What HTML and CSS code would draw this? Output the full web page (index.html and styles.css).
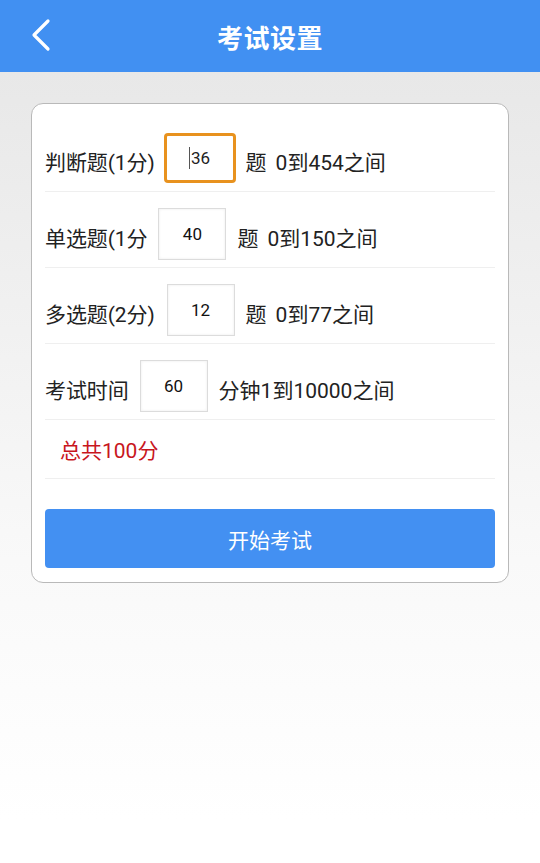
FILE: index.html
```html
<!DOCTYPE html>
<html lang="zh">
<head>
<meta charset="utf-8">
<title>考试设置</title>
<link rel="stylesheet" href="styles.css">
</head>
<body>
<header class="bar">
  <svg class="back" width="22" height="34" viewBox="0 0 22 34"><path d="M18 3 L4 17 L18 31" fill="none" stroke="#fff" stroke-width="3.2" stroke-linecap="round" stroke-linejoin="round"/></svg>
  <h1 class="title">考试设置</h1>
</header>
<main class="page">
  <section class="card">
    <div class="row">
      <span class="label">判断题(1分)</span>
      <span class="field focus"><span class="caret"></span>36</span>
      <span class="unit">题</span>
      <span class="range">0到454之间</span>
    </div>
    <div class="row">
      <span class="label">单选题(1分</span>
      <span class="field">40</span>
      <span class="unit">题</span>
      <span class="range">0到150之间</span>
    </div>
    <div class="row">
      <span class="label">多选题(2分)</span>
      <span class="field">12</span>
      <span class="unit">题</span>
      <span class="range">0到77之间</span>
    </div>
    <div class="row">
      <span class="label">考试时间</span>
      <span class="field">60</span>
      <span class="unit">分钟1到10000之间</span>
    </div>
    <div class="total">总共100分</div>
    <button class="start">开始考试</button>
  </section>
</main>
</body>
</html>
```

FILE: styles.css
```css
html, body {
  margin: 0;
  padding: 0;
}
body {
  width: 540px;
  height: 863px;
  font-family: Roboto, "Noto Sans CJK SC", sans-serif;
  background: linear-gradient(to bottom, #e8e8e8 72px, #f9f9f9 560px, #ffffff 820px);
  color: #222;
  overflow: hidden;
}
.bar {
  height: 72px;
  background: #4190f2;
  display: flex;
  align-items: center;
  justify-content: center;
  position: relative;
}
.back {
  position: absolute;
  left: 30px;
  top: 18px;
}
.title {
  margin: 0;
  color: #fff;
  font-size: 26px;
  font-weight: bold;
  letter-spacing: 0.5px;
}
.page {
  padding: 31px 31px 0 31px;
}
.card {
  background: #fff;
  border: 1px solid #b9b9b9;
  border-radius: 12px;
  padding: 12px 13px 14px 13px;
}
.row {
  display: flex;
  align-items: center;
  padding: 16px 0 7px 0;
  border-bottom: 1px solid #efefef;
  font-size: 21px;
  height: 52px;
}
.label, .unit, .range {
  padding-top: 10px;
  line-height: 24px;
  white-space: nowrap;
}
.label {
  letter-spacing: -0.1px;
}
.range {
  margin-left: 9px;
}
.field {
  box-sizing: border-box;
  width: 68px;
  height: 52px;
  margin: 0 11px;
  border: 1px solid #dcdcdc;
  box-shadow: inset 0 0 3px rgba(0,0,0,0.08);
  display: flex;
  align-items: center;
  justify-content: center;
  font-size: 17px;
  color: #111;
  position: relative;
}
.field.focus {
  width: 72px;
  height: 50px;
  margin: 0 10px 0 9px;
  border: 3px solid #e8921e;
  border-radius: 4px;
  box-shadow: none;
  color: #222;
}
.caret {
  width: 1px;
  height: 22px;
  background: #555;
  margin-right: 1px;
}
.row:nth-child(2) .field { margin-left: 11px; }
.row:nth-child(3) .field { margin-left: 12px; }
.row:nth-child(4) .field { margin-left: 11px; }
.total {
  height: 58px;
  border-bottom: 1px solid #efefef;
  display: flex;
  align-items: center;
  padding-left: 15px;
  color: #c8161d;
  font-size: 21px;
}
.start {
  display: block;
  width: 100%;
  height: 59px;
  margin-top: 30px;
  border: none;
  border-radius: 4px;
  background: #4390f2;
  color: #fff;
  font-family: Roboto, "Noto Sans CJK SC", sans-serif;
  font-size: 21px;
}
```
